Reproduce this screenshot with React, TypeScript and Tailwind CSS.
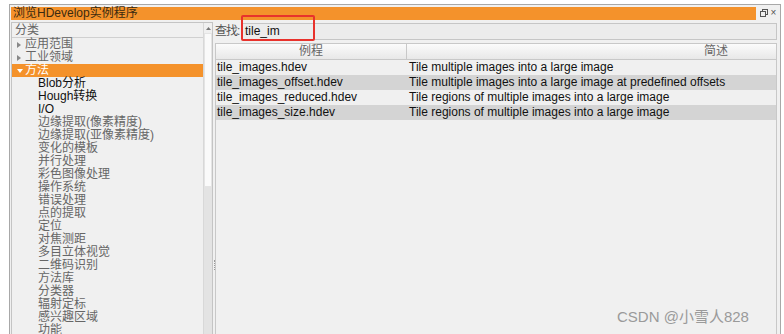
import React from 'react';

const font = { fontFamily: '"Liberation Sans", "Noto Sans CJK SC", sans-serif' };

type Item = { label: string; level: 0 | 1; arrow?: 'right' | 'down'; selected?: boolean; dark?: boolean };

const items: Item[] = [
  { label: '应用范围', level: 0, arrow: 'right' },
  { label: '工业领域', level: 0, arrow: 'right' },
  { label: '方法', level: 0, arrow: 'down', selected: true },
  { label: 'Blob分析', level: 1, dark: true },
  { label: 'Hough转换', level: 1, dark: true },
  { label: 'I/O', level: 1, dark: true },
  { label: '边缘提取(像素精度)', level: 1 },
  { label: '边缘提取(亚像素精度)', level: 1 },
  { label: '变化的模板', level: 1 },
  { label: '并行处理', level: 1 },
  { label: '彩色图像处理', level: 1 },
  { label: '操作系统', level: 1 },
  { label: '错误处理', level: 1 },
  { label: '点的提取', level: 1 },
  { label: '定位', level: 1 },
  { label: '对焦测距', level: 1 },
  { label: '多目立体视觉', level: 1 },
  { label: '二维码识别', level: 1 },
  { label: '方法库', level: 1 },
  { label: '分类器', level: 1 },
  { label: '辐射定标', level: 1 },
  { label: '感兴趣区域', level: 1 },
  { label: '功能', level: 1 },
];

const rows = [
  ['tile_images.hdev', 'Tile multiple images into a large image'],
  ['tile_images_offset.hdev', 'Tile multiple images into a large image at predefined offsets'],
  ['tile_images_reduced.hdev', 'Tile regions of multiple images into a large image'],
  ['tile_images_size.hdev', 'Tile regions of multiple images into a large image'],
];

function TreeRow({ item }: { item: Item }) {
  return (
    <div
      className={`flex items-center h-[13px] text-[12px] leading-[13px] whitespace-nowrap ${
        item.selected ? 'bg-[#f4922b] text-white' : item.dark ? 'text-[#111]' : 'text-[#666]'
      }`}
    >
      <div className={item.level === 0 ? 'w-[13px] pl-[5px]' : 'w-[26px]'}>
        {item.arrow === 'right' && (
          <svg width="4" height="6" viewBox="0 0 4 6">
            <path d="M0 0 L4 3 L0 6 Z" fill="#888" />
          </svg>
        )}
        {item.arrow === 'down' && (
          <svg width="6" height="4" viewBox="0 0 6 4">
            <path d="M0 0 L6 0 L3 4 Z" fill="#fff" />
          </svg>
        )}
      </div>
      <span>{item.label}</span>
    </div>
  );
}

export default function App() {
  return (
    <div className="relative w-[784px] h-[334px] bg-white overflow-hidden" style={font}>
      <div className="ml-[9px] mt-[4px] w-[772px] h-[340px] border border-[#a8a8a8] bg-[#f0f0f0] flex flex-col">
        {/* Title bar */}
        <div className="flex items-center h-[14px] mt-[1px] pl-[1px]">
          <div className="flex-1 h-[13px] bg-[#f4922b] text-[12px] leading-[13px] text-[#3a2a10] pl-[2px]">
            浏览HDevelop实例程序
          </div>
          <div className="w-[24px] flex items-center justify-center gap-[3px] text-[#555] text-[10px] leading-none">
            <svg width="8" height="8" viewBox="0 0 8 8">
              <rect x="2.5" y="0.5" width="5" height="5" fill="none" stroke="#555" />
              <rect x="0.5" y="2.5" width="5" height="5" fill="#f0f0f0" stroke="#555" />
            </svg>
            <span>×</span>
          </div>
        </div>

        {/* Body */}
        <div className="flex flex-1 mt-[2px] pl-[1px]">
          {/* Left panel */}
          <div className="w-[202px] flex border border-[#c4c4c4] bg-[#f0f0f0]">
            <div className="flex-1 flex flex-col">
              <div className="h-[15px] border-b border-[#d0d0d0] text-[12px] leading-[15px] text-[#666] pl-[3px]">分类</div>
              {items.map((it) => (
                <TreeRow key={it.label} item={it} />
              ))}
            </div>
            <div className="w-[9px] flex flex-col border-l border-[#d8d8d8]">
              <div className="h-[10px] flex items-center justify-center">
                <svg width="5" height="3" viewBox="0 0 5 3">
                  <path d="M0 3 L2.5 0 L5 3 Z" fill="#777" />
                </svg>
              </div>
              <div className="h-[154px] bg-[#fafafa] border border-[#e4e4e4]" />
              <div className="flex-1 bg-[#e3e3e3]" />
            </div>
          </div>

          {/* Splitter */}
          <div className="w-[2px] flex items-center justify-center">
            <div className="h-[10px] w-[1px] border-l border-dotted border-[#999] mt-[165px]" />
          </div>

          {/* Right panel */}
          <div className="w-[562px] flex flex-col">
            <div className="flex items-center h-[17px] mt-[1px]">
              <span className="shrink-0 text-[12px] leading-[17px] text-[#555] w-[27px] whitespace-nowrap tracking-[-1px]">
                查找:
              </span>
              <div className="flex-1 h-[17px] border border-[#c6c6c6] bg-[#ececec] text-[12px] leading-[15px] text-[#111] pl-[2px]">
                tile_im
              </div>
            </div>
            <div className="flex-1 mt-[3px] border border-[#c8c8c8] bg-[#f0f0f0]">
              <div className="flex h-[16px] border-b border-[#c8c8c8] bg-gradient-to-b from-[#fbfbfb] to-[#e8e8e8] text-[12px] leading-[15px] text-[#666]">
                <div className="w-[191px] text-center border-r border-[#c8c8c8]">例程</div>
                <div className="flex-1 text-right pr-[48px]">简述</div>
              </div>
              {rows.map(([name, desc], i) => (
                <div
                  key={name}
                  className={`flex h-[15px] text-[12px] leading-[15px] text-[#111] whitespace-nowrap ${
                    i % 2 ? 'bg-[#d4d4d4]' : 'bg-[#f0f0f0]'
                  }`}
                >
                  <div className="w-[191px] pl-[1px]">{name}</div>
                  <div className="flex-1 pl-[2px]">{desc}</div>
                </div>
              ))}
            </div>
          </div>
        </div>
      </div>

      {/* Red annotation */}
      <div className="absolute left-[241px] top-[15px] w-[74px] h-[26px] border-2 border-[#e8322c] rounded-[2px]" />

      {/* Watermark */}
      <div className="absolute left-[617px] top-[306px] text-[15px] text-[#9a9a9a]">CSDN @小雪人828</div>
    </div>
  );
}
